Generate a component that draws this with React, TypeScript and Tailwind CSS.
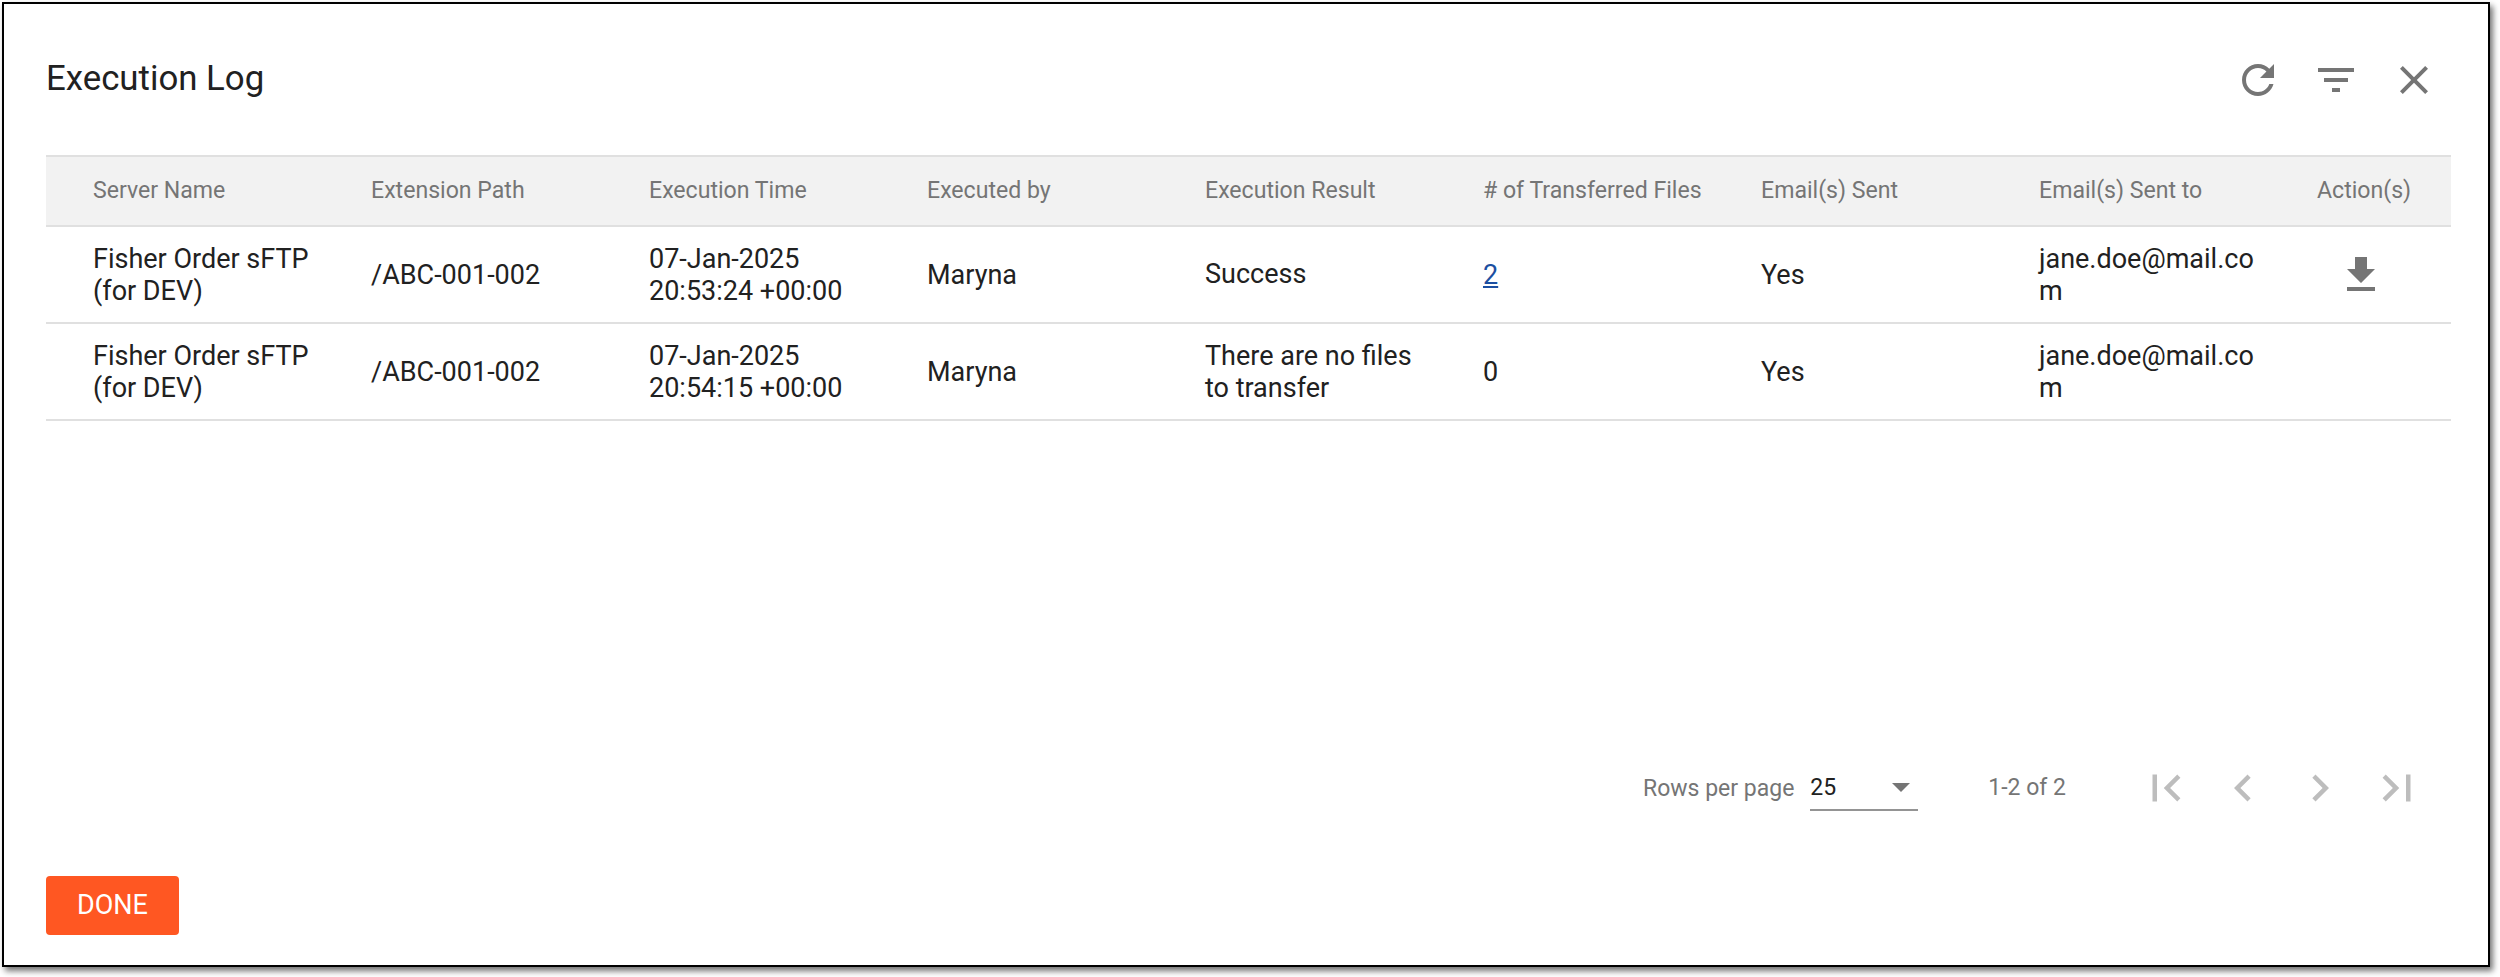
const columns = [
  'Server Name',
  'Extension Path',
  'Execution Time',
  'Executed by',
  'Execution Result',
  '# of Transferred Files',
  'Email(s) Sent',
  'Email(s) Sent to',
  'Action(s)',
];

const rows = [
  { time: '07-Jan-2025 20:53:24 +00:00', result: 'Success', files: '2', download: true },
  { time: '07-Jan-2025 20:54:15 +00:00', result: 'There are no files to transfer', files: '0', download: false },
];

function Icon({ d, className }: { d: string; className: string }) {
  return (
    <svg viewBox="0 0 24 24" className={className}>
      <path d={d} />
    </svg>
  );
}

function PagerIcon({ d }: { d: string }) {
  return <Icon d={d} className="w-[54px] h-[54px] fill-[#bdbdbd]" />;
}

export default function App() {
  return (
    <div className="h-[977px] bg-white font-['Roboto',sans-serif]">
      <div className="ml-[2px] mt-[2px] w-[2488px] h-[965px] border-2 border-black bg-white shadow-[3px_4px_6px_rgba(0,0,0,0.55)] flex flex-col pl-[42px] pr-[37px]">
        <div className="flex items-center justify-between h-[151px]">
          <h1 className="text-[34.8px] mb-[3px] text-[#212121]">Execution Log</h1>
          <div className="flex items-center gap-[30px] pr-[13px]">
            <Icon
              className="w-[48px] h-[48px] fill-[#757575]"
              d="M17.65 6.35C16.2 4.9 14.21 4 12 4c-4.42 0-7.99 3.58-7.99 8s3.57 8 7.99 8c3.73 0 6.84-2.55 7.73-6h-2.08c-.82 2.33-3.04 4-5.65 4-3.31 0-6-2.69-6-6s2.69-6 6-6c1.66 0 3.14.69 4.22 1.78L13 11h7V4l-2.35 2.35z"
            />
            <Icon className="w-[48px] h-[48px] fill-[#757575]" d="M10 18h4v-2h-4v2zM3 6v2h18V6H3zm3 7h12v-2H6v2z" />
            <Icon
              className="w-[48px] h-[48px] fill-[#757575]"
              d="M19 6.41 17.59 5 12 10.59 6.41 5 5 6.41 10.59 12 5 17.59 6.41 19 12 13.41 17.59 19 19 17.59 13.41 12z"
            />
          </div>
        </div>

        <div className="grid grid-cols-[repeat(8,278px)_1fr] pl-[47px] h-[72px] items-center bg-[#f2f2f2] border-y-2 border-[#e0e0e0] text-[23.1px] text-[#757575]">
          {columns.map((c) => (
            <div key={c} className="whitespace-nowrap">{c}</div>
          ))}
        </div>

        {rows.map((r) => (
          <div
            key={r.time}
            className="grid grid-cols-[repeat(8,278px)_1fr] pl-[47px] h-[97px] items-center border-b-2 border-[#e0e0e0] text-[27px] leading-[32px] text-[#212121]"
          >
            <div className="w-[232px]">Fisher Order sFTP (for DEV)</div>
            <div className="w-[232px]">/ABC-001-002</div>
            <div className="w-[232px]">{r.time}</div>
            <div className="w-[232px]">Maryna</div>
            <div className={r.download ? 'w-[232px] mb-[2px]' : 'w-[232px]'}>{r.result}</div>
            <div className="w-[232px]">
              {r.files === '2' ? <a className="underline text-[#1c4fa1]">2</a> : r.files}
            </div>
            <div className="w-[232px]">Yes</div>
            <div className="w-[232px] break-all">jane.doe@mail.com</div>
            <div className="flex pl-[20px]">
              {r.download && (
                <Icon className="w-[48px] h-[48px] fill-[#757575]" d="M19 9h-4V3H9v6H5l7 7 7-7zM5 18v2h14v-2H5z" />
              )}
            </div>
          </div>
        ))}

        <div className="mt-auto flex items-center justify-end pr-[27px] h-[60px] text-[23px] text-[#757575]">
          <span className="pt-[2px]">Rows per page</span>
          <div className="ml-[16px] w-[108px] h-[46px] border-b-2 border-[#949494] flex items-center justify-between pr-[8px] text-[#212121]">
            <span className="pt-[2px]">25</span>
            <span className="w-0 h-0 border-x-[9px] border-x-transparent border-t-[9px] border-t-[#757575]" />
          </div>
          <span className="ml-[70px]">1-2 of 2</span>
          <div className="ml-[73px] flex items-center gap-[23px]">
            <PagerIcon d="M18.41 16.59 13.82 12l4.59-4.59L17 6l-6 6 6 6zM6 6h2v12H6z" />
            <PagerIcon d="M15.41 7.41 14 6l-6 6 6 6 1.41-1.41L10.83 12z" />
            <PagerIcon d="M10 6 8.59 7.41 13.17 12l-4.58 4.59L10 18l6-6z" />
            <PagerIcon d="M5.59 7.41 10.18 12l-4.59 4.59L7 18l6-6-6-6zM16 6h2v12h-2z" />
          </div>
        </div>

        <div className="mt-[58px] mb-[30px]">
          <button className="block w-[133px] h-[59px] rounded-[4px] bg-[#ff5722] text-white text-[27px]">DONE</button>
        </div>
      </div>
    </div>
  );
}
